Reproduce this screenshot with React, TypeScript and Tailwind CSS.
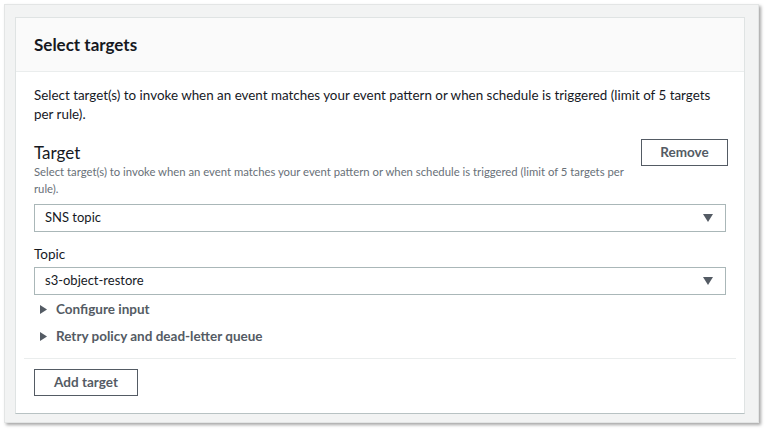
import React from "react";

const font = { fontFamily: 'Lato, "Open Sans", "Liberation Sans", sans-serif' };

function Caret({ className }: { className?: string }) {
  return (
    <svg viewBox="0 0 10 8" className={className} fill="currentColor">
      <path d="M0 0h10L5 8z" />
    </svg>
  );
}

function SelectBox({ value }: { value: string }) {
  return (
    <div className="flex h-[28px] items-center justify-between border border-[#aab7b8] bg-white pl-[10px] pr-[12px] text-[13px] text-[#16191f]">
      <span>{value}</span>
      <Caret className="h-[8px] w-[10px] text-[#545b64]" />
    </div>
  );
}

function Expander({ label }: { label: string }) {
  return (
    <div className="flex items-center gap-[9px] pl-[6px] text-[13.5px] font-bold text-[#545b64]">
      <svg viewBox="0 0 7 9" className="h-[9px] w-[7px]" fill="currentColor">
        <path d="M0 0l7 4.5L0 9z" />
      </svg>
      <span>{label}</span>
    </div>
  );
}

export default function App() {
  return (
    <div className="h-[432px] w-[768px] overflow-hidden bg-white pl-[4px] pt-[4px]" style={font}>
      {/* Outer frame */}
      <div className="h-[419px] w-[755px] border border-[#e3e5e5] bg-[#f2f3f3] pl-[10px] pt-[12px] shadow-[2px_2px_3px_rgba(0,0,0,0.35)]">
        {/* Card */}
        <div className="flex h-[397px] w-[730px] flex-col border border-[#dfe3e3] border-b-[#b8c2c3] bg-white">
          <header className="flex h-[54px] items-center border-b border-[#eaeded] bg-[#fafafa] px-[18px]">
            <h2 className="text-[17px] font-bold text-[#16191f]">Select targets</h2>
          </header>

          <div className="px-[18px] pt-[14px]">
            <p className="text-[13.4px] leading-[19px] text-[#16191f]">
              Select target(s) to invoke when an event matches your event pattern or when schedule is triggered (limit of 5 targets per rule).
            </p>

            <div className="mt-[19px] flex items-start justify-between">
              <div className="w-[604px]">
                <h3 className="text-[17px] leading-[20px] text-[#16191f]">Target</h3>
                <p className="text-[11.3px] leading-[17px] text-[#687078]">
                  Select target(s) to invoke when an event matches your event pattern or when schedule is triggered (limit of 5 targets per rule).
                </p>
              </div>
              <button className="mr-[-2px] mt-[-4px] h-[27px] w-[87px] border border-[#545b64] bg-white text-[13.5px] font-bold text-[#545b64]">
                Remove
              </button>
            </div>

            <div className="mt-[7px]">
              <SelectBox value="SNS topic" />
            </div>

            <div className="mt-[13px] text-[13.5px] leading-[18px] text-[#16191f]">Topic</div>
            <div className="mt-[4px]">
              <SelectBox value="s3-object-restore" />
            </div>

            <div className="mt-[5px] flex flex-col gap-[9px] leading-[18px]">
              <Expander label="Configure input" />
              <Expander label="Retry policy and dead-letter queue" />
            </div>
          </div>

          <div className="mx-[8px] mt-[13px] border-t border-[#eaeded]" />

          <div className="px-[18px] pt-[10px]">
            <button className="h-[27px] w-[104px] border border-[#545b64] bg-white text-[13.5px] font-bold text-[#545b64]">
              Add target
            </button>
          </div>
        </div>
      </div>
    </div>
  );
}
